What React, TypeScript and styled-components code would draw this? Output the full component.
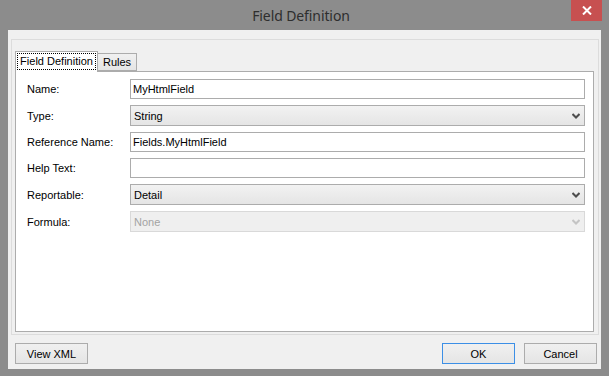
import styled, { createGlobalStyle } from 'styled-components'

const GlobalStyle = createGlobalStyle`
    html, body {
        margin: 0;
        padding: 0;
        overflow: hidden;
    }
    * {
        box-sizing: border-box;
    }
`

// outer window frame (grey Windows 8 chrome)
const Window = styled.div`
    width: 609px;
    height: 376px;
    display: flex;
    flex-direction: column;
    background: #8c8c8c;
    font-family: "Liberation Sans", Arial, sans-serif;
    font-size: 11px;
    color: #000;
`

const TitleBar = styled.div`
    height: 30px;
    flex-shrink: 0;
    display: grid;
    grid-template-columns: 1fr auto 1fr;
    align-items: start;
    padding-right: 7px;
`

const Title = styled.div`
    grid-column: 2;
    padding-top: 6px;
    font-family: "Noto Sans", "Open Sans", sans-serif;
    font-size: 14px;
    color: #2e2e2e;
    letter-spacing: -0.1px;
`

const CloseButton = styled.div`
    grid-column: 3;
    justify-self: end;
    width: 31px;
    height: 21px;
    background: #c75050;
    display: flex;
    align-items: center;
    justify-content: center;
`

const Client = styled.div`
    flex: 1;
    margin: 0 8px 7px 8px;
    background: #f0f0f0;
    display: flex;
    flex-direction: column;
`

// light bordered panel that holds the tab control
const Panel = styled.div`
    flex: 1;
    margin: 9px 2px 0 3px;
    border: 1px solid #dcdcdc;
    padding: 11px 4px 2px 3px;
    display: flex;
    flex-direction: column;
`

const TabStrip = styled.div`
    display: flex;
    align-items: flex-end;
    height: 20px;
    position: relative;
    z-index: 1;
`

const Tab = styled.div<{ $active?: boolean }>`
    height: ${p => (p.$active ? '21px' : '18px')};
    width: ${p => (p.$active ? '83px' : '40px')};
    margin-left: ${p => (p.$active ? '0' : '-1px')};
    margin-bottom: ${p => (p.$active ? '-1px' : '0')};
    border: 1px solid #acacac;
    border-bottom: ${p => (p.$active ? 'none' : '1px solid #acacac')};
    background: ${p => (p.$active ? '#fff' : 'linear-gradient(#f0f0f0, #e5e5e5)')};
    display: flex;
    align-items: ${p => (p.$active ? 'flex-start' : 'center')};
    justify-content: center;
    padding-top: ${p => (p.$active ? '2px' : '0')};
`

const FocusLabel = styled.span`
    outline: 1px dotted #000;
    outline-offset: 0;
    padding: 1px 2px;
    line-height: 13px;
`

const TabPage = styled.div`
    flex: 1;
    background: #fff;
    border: 1px solid #acacac;
    padding: 7px 8px 0 11px;
`

const Form = styled.div`
    display: grid;
    grid-template-columns: 103px 1fr;
    row-gap: 6px;
    align-items: center;
`

const Label = styled.div`
    white-space: nowrap;
`

const TextBox = styled.input`
    height: 20px;
    width: 100%;
    border: 1px solid #acacac;
    background: #fff;
    padding: 0 2px;
    font-family: "Liberation Sans", Arial, sans-serif;
    font-size: 11px;
    color: #000;
    outline: none;
`

const Combo = styled.div<{ $disabled?: boolean }>`
    height: 21px;
    display: flex;
    align-items: center;
    justify-content: space-between;
    padding: 0 4px 0 3px;
    border: 1px solid ${p => (p.$disabled ? '#d9d9d9' : '#acacac')};
    background: ${p => (p.$disabled ? '#efefef' : 'linear-gradient(#f2f2f2, #e5e5e5)')};
    color: ${p => (p.$disabled ? '#a3a3a3' : '#000')};
`

const ButtonRow = styled.div`
    display: flex;
    align-items: center;
    gap: 9px;
    margin-top: 8px;
    padding: 0 4px 5px 7px;
`

const Spacer = styled.div`
    flex: 1;
`

const Button = styled.div<{ $default?: boolean }>`
    width: 73px;
    height: 21px;
    display: flex;
    align-items: center;
    justify-content: center;
    border: 1px solid ${p => (p.$default ? '#3c8fe6' : '#acacac')};
    background: linear-gradient(#f0f0f0, #e5e5e5);
`

function Chevron({ disabled }: { disabled?: boolean }) {
    return (
        <svg width="8" height="6" viewBox="0 0 8 6">
            <polyline
                points="0.5,1 4,4.5 7.5,1"
                fill="none"
                stroke={disabled ? '#c4c4c4' : '#4d4d4d'}
                strokeWidth="2"
            />
        </svg>
    )
}

function App() {
    return (
        <>
            <GlobalStyle />
            <Window>
                <TitleBar>
                    <Title>Field Definition</Title>
                    <CloseButton>
                        <svg width="10" height="9" viewBox="0 0 10 9">
                            <path d="M1 0.5 L9 8.5 M9 0.5 L1 8.5" stroke="#fff" strokeWidth="2" />
                        </svg>
                    </CloseButton>
                </TitleBar>
                <Client>
                    <Panel>
                        <TabStrip>
                            <Tab $active><FocusLabel>Field Definition</FocusLabel></Tab>
                            <Tab>Rules</Tab>
                        </TabStrip>
                        <TabPage>
                            <Form>
                                <Label>Name:</Label>
                                <TextBox readOnly defaultValue="MyHtmlField" />
                                <Label>Type:</Label>
                                <Combo>String<Chevron /></Combo>
                                <Label>Reference Name:</Label>
                                <TextBox readOnly defaultValue="Fields.MyHtmlField" />
                                <Label>Help Text:</Label>
                                <TextBox readOnly defaultValue="" />
                                <Label>Reportable:</Label>
                                <Combo>Detail<Chevron /></Combo>
                                <Label>Formula:</Label>
                                <Combo $disabled>None<Chevron disabled /></Combo>
                            </Form>
                        </TabPage>
                    </Panel>
                    <ButtonRow>
                        <Button>View XML</Button>
                        <Spacer />
                        <Button $default>OK</Button>
                        <Button>Cancel</Button>
                    </ButtonRow>
                </Client>
            </Window>
        </>
    )
}

export default App
